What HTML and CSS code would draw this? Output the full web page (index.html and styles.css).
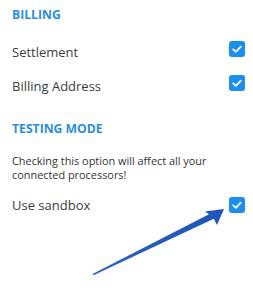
FILE: index.html
```html
<!DOCTYPE html>
<html>
<head>
<meta charset="utf-8">
<link rel="stylesheet" href="styles.css">
</head>
<body>
<div class="panel">
  <h3 class="heading heading-billing">BILLING</h3>
  <div class="row row-billing">
    <span class="label">Settlement</span>
    <span class="check"><svg viewBox="0 0 16 16" width="16" height="16"><path d="M4.2 8.3 L6.9 10.9 L11.8 5.6" fill="none" stroke="#fff" stroke-width="1.8" stroke-linecap="round" stroke-linejoin="round"/></svg></span>
  </div>
  <div class="row row-billing">
    <span class="label">Billing Address</span>
    <span class="check"><svg viewBox="0 0 16 16" width="16" height="16"><path d="M4.2 8.3 L6.9 10.9 L11.8 5.6" fill="none" stroke="#fff" stroke-width="1.8" stroke-linecap="round" stroke-linejoin="round"/></svg></span>
  </div>
  <h3 class="heading heading-testing">TESTING MODE</h3>
  <p class="note">Checking this option will affect all your connected processors!</p>
  <div class="row row-sandbox">
    <span class="label">Use sandbox</span>
    <span class="check"><svg viewBox="0 0 16 16" width="16" height="16"><path d="M4.2 8.3 L6.9 10.9 L11.8 5.6" fill="none" stroke="#fff" stroke-width="1.8" stroke-linecap="round" stroke-linejoin="round"/></svg></span>
  </div>
  <svg class="arrow" viewBox="0 0 253 292" width="253" height="292">
    <defs>
      <linearGradient id="ag" x1="0" y1="1" x2="1" y2="0">
        <stop offset="0" stop-color="#2a62c4"/>
        <stop offset="1" stop-color="#1d56b8"/>
      </linearGradient>
    </defs>
    <path d="M92.5 274 L209 214.3 L205 211.5 L224 209 L217 225 L213.8 218.8 L93.5 275.2 Z" fill="url(#ag)"/>
  </svg>
</div>
</body>
</html>
```
FILE: styles.css
```css
html, body {
  margin: 0;
  padding: 0;
  background: #ffffff;
}
body {
  font-family: "Open Sans", "DejaVu Sans", sans-serif;
  color: #3c3c3c;
  width: 253px;
  height: 292px;
  overflow: hidden;
}
.panel {
  position: relative;
  width: 253px;
  height: 292px;
  padding: 7px 8px 0 12px;
  box-sizing: border-box;
}
.heading {
  margin: 0;
  font-size: 12.2px;
  line-height: 16px;
  font-weight: 700;
  color: #2b8de0;
}
.heading-billing {
  margin-bottom: 11.7px;
}
.heading-testing {
  margin-top: 18.6px;
}
.row {
  display: flex;
  align-items: center;
  justify-content: space-between;
  height: 34px;
}
.label {
  font-size: 13px;
  line-height: 18px;
}
.check {
  width: 16px;
  height: 16px;
  border-radius: 3px;
  background: #1b8ef2;
  display: flex;
  align-items: center;
  justify-content: center;
}
.row-billing .check {
  margin-bottom: 5px;
}
.note {
  margin: 17.2px 0 0 0;
  font-size: 10.9px;
  line-height: 14px;
  color: #333;
}
.row-sandbox {
  margin-top: 5.5px;
}
.arrow {
  position: absolute;
  left: 0;
  top: 0;
  pointer-events: none;
}
```
